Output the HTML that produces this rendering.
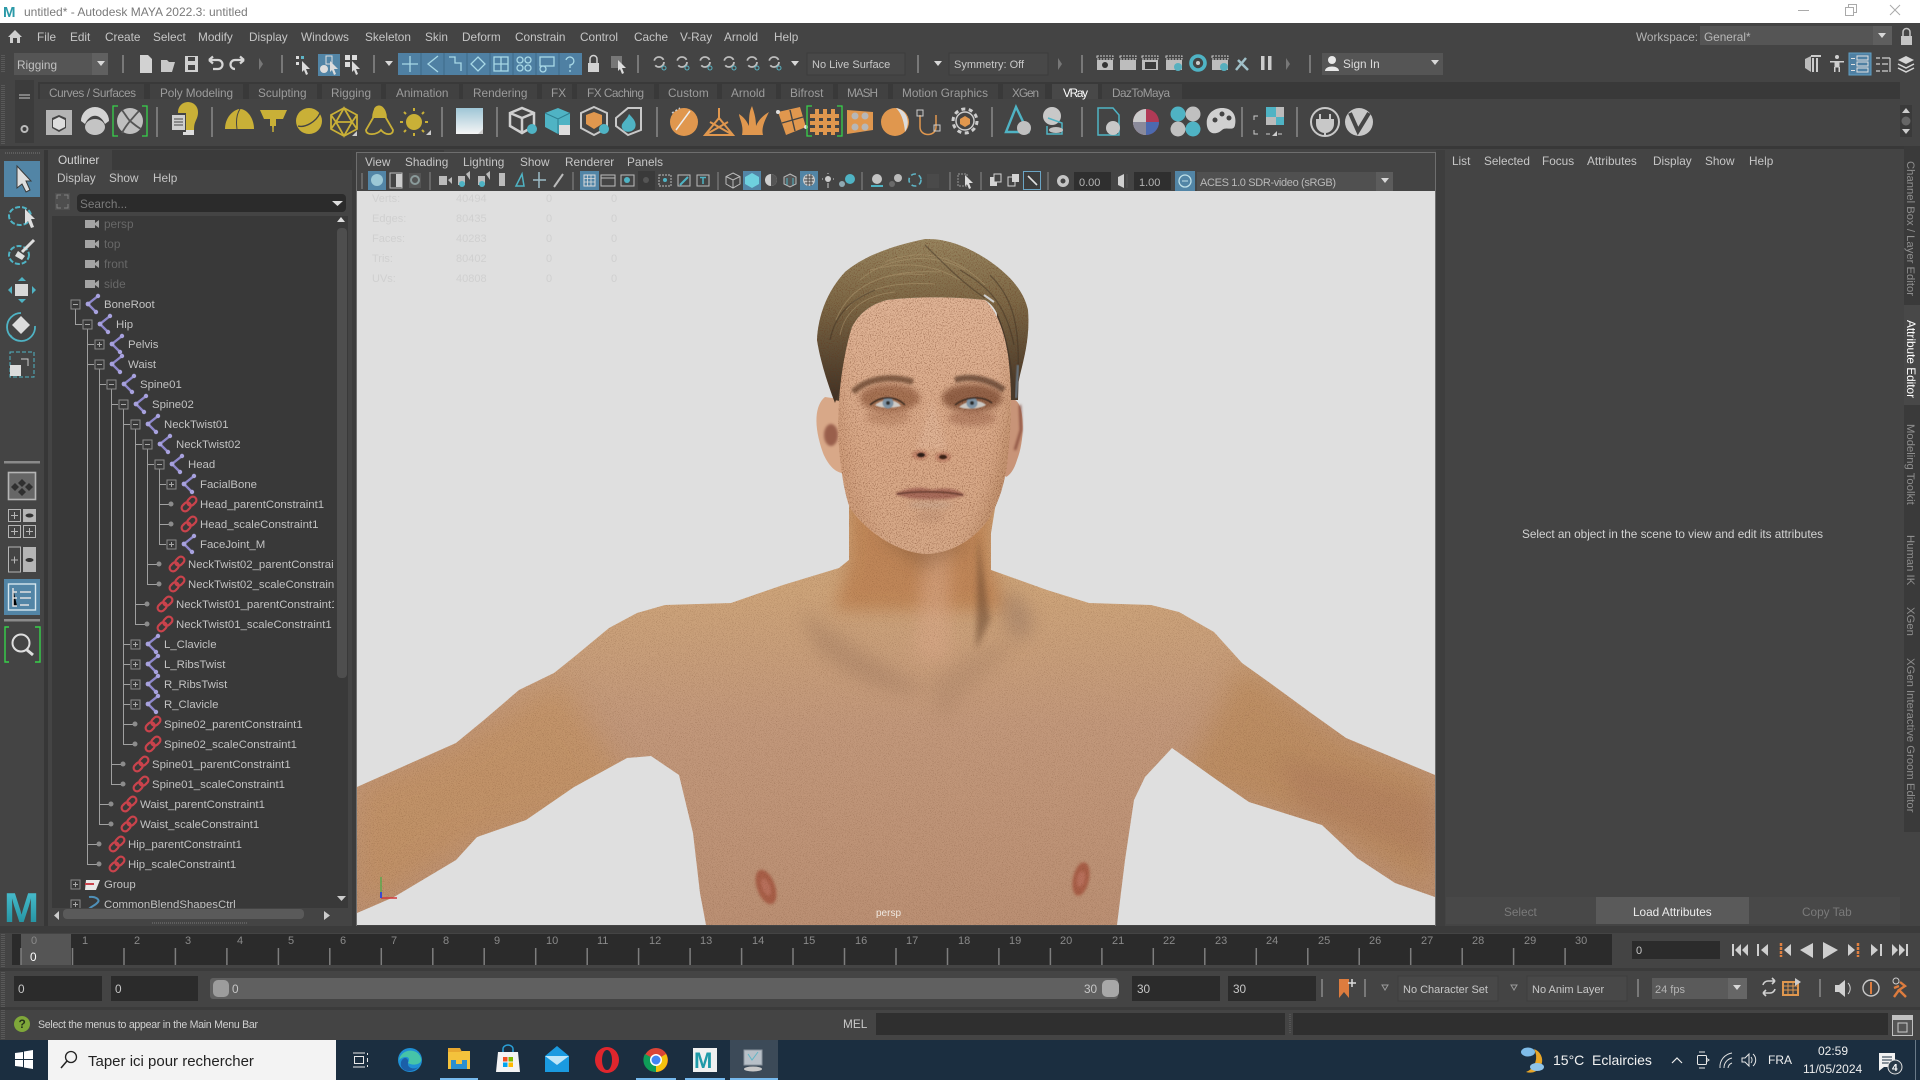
<!DOCTYPE html>
<html><head><meta charset="utf-8"><title>untitled* - Autodesk MAYA 2022.3: untitled</title>
<style>
html,body{margin:0;padding:0;background:#444;width:1920px;height:1080px;overflow:hidden}
svg{display:block}
text{font-family:"Liberation Sans",sans-serif;font-size:11.8px;fill:#c6c6c6;white-space:pre}
.tab{fill:#9c9c9c}.dim{fill:#686868}.tr{fill:#c2c2c2;font-size:11.4px}.w{fill:#fff}.num{fill:#8a8a8a;font-size:11px}.lt{fill:#d2d2d2}
.hud{fill:#d0d0d0;font-size:11px}.vt{fill:#8e8e8e;font-size:11.3px}
.tb{fill:#f2f2f2;font-size:14px}.sm{font-size:11px;fill:#c8c8c8}
</style></head><body>
<svg xmlns="http://www.w3.org/2000/svg" width="1920" height="1080" viewBox="0 0 1920 1080">
<defs>
<g id="j"><path d="M5-8-5 0 3 8" fill="none" stroke="#8f88cb" stroke-width="2.400"/><circle cx="5" cy="-8" r="2.200" fill="#a8a2de"/><circle cx="-5" cy="0" r="2.400" fill="#a8a2de"/><circle cx="3" cy="8" r="2.200" fill="#a8a2de"/></g>
<g id="c"><g transform="rotate(-45)" fill="none" stroke="#c9434c" stroke-width="2.200"><rect x="-9" y="-3.500" width="10" height="7" rx="3.500"/><rect x="-1" y="-3.500" width="10" height="7" rx="3.500"/></g></g>
<g id="cam"><rect x="-7" y="-4" width="10" height="8" fill="#a4a4a4"/><path d="M3-1 7-4V4L3 1Z" fill="#a4a4a4"/></g>
<g id="bm"><rect x="-4.500" y="-4.500" width="9" height="9" fill="#393939" stroke="#8a8a8a"/><path d="M-2.500 0H2.500" stroke="#a8a8a8"/></g>
<g id="bp"><rect x="-4.500" y="-4.500" width="9" height="9" fill="#393939" stroke="#8a8a8a"/><path d="M-2.500 0H2.500M0-2.500V2.500" stroke="#a8a8a8"/></g>
<circle id="d" r="2.500" fill="#8c8c8c"/>
<path id="sep" d="M0-9V9" stroke="#8a8a8a" stroke-width="1.500"/>
<path id="tri" d="M-2-6 2 0-2 6Z" fill="#777"/>
<path id="dn" d="M-4-2H4L0 3Z" fill="#d8d8d8"/>
<path id="dno" d="M-3-2H3L0 3Z" fill="none" stroke="#9a9a9a"/>
<path id="cor" d="M5 5H0L5 0Z" fill="#ccc"/>
<path id="cur" d="M-3-8 5 0H1L3 5 1 6-1 1-3 3Z" fill="#dcdcdc"/>
<g id="sn"><circle cx="-1" cy="-1" r="5" fill="none" stroke="#bdbdbd" stroke-width="1.800" stroke-dasharray="12 5"/><circle cx="4" cy="5" r="2" fill="none" stroke="#57b0bf" stroke-width="1"/></g>
<g id="cl"><rect x="-8" y="-6" width="16" height="3" fill="none" stroke="#ccc" stroke-dasharray="2 1"/><rect x="-8" y="-2" width="16" height="10" fill="#bdbdbd"/></g>
<linearGradient id="bod" x1="0" y1="590" x2="0" y2="925" gradientUnits="userSpaceOnUse"><stop offset="0" stop-color="#cda47a"/><stop offset=".4" stop-color="#c2987b"/><stop offset="1" stop-color="#bb9074"/></linearGradient>
<linearGradient id="hairg" x1="0" y1="238" x2="0" y2="400" gradientUnits="userSpaceOnUse"><stop offset="0" stop-color="#988660"/><stop offset=".4" stop-color="#7c6846"/><stop offset="1" stop-color="#3f3124"/></linearGradient>
<linearGradient id="fc" x1="0" y1="300" x2="0" y2="553" gradientUnits="userSpaceOnUse"><stop offset="0" stop-color="#e0b496"/><stop offset=".6" stop-color="#d9a988"/><stop offset="1" stop-color="#d6a988"/></linearGradient>
<linearGradient id="whg" x1="0" y1="0" x2="0" y2="1"><stop offset="0" stop-color="#9fc6d6"/><stop offset="1" stop-color="#f5f5f5"/></linearGradient>
<linearGradient id="mg" x1="0" y1="0" x2="0" y2="1"><stop offset="0" stop-color="#4fc6d6"/><stop offset="1" stop-color="#1d8a99"/></linearGradient>
<filter id="nz" filterUnits="userSpaceOnUse" x="357" y="191" width="1078" height="734" color-interpolation-filters="sRGB">
<feTurbulence type="fractalNoise" baseFrequency="1.15" numOctaves="2" seed="4" result="n"/>
<feColorMatrix in="n" type="matrix" values="0 0 0 0 .36 0 0 0 0 .2 0 0 0 0 .1 1 0 0 0 -.52" result="s"/>
<feComposite in="s" in2="SourceAlpha" operator="in" result="sp"/>
<feMerge><feMergeNode in="SourceGraphic"/><feMergeNode in="sp"/></feMerge></filter>
<filter id="nz2" filterUnits="userSpaceOnUse" x="357" y="191" width="1078" height="734" color-interpolation-filters="sRGB">
<feTurbulence type="fractalNoise" baseFrequency=".85" numOctaves="2" seed="9" result="n"/>
<feColorMatrix in="n" type="matrix" values="0 0 0 0 .4 0 0 0 0 .2 0 0 0 0 .1 1.7 0 0 0 -.84" result="s"/>
<feComposite in="s" in2="SourceAlpha" operator="in" result="sp"/>
<feMerge><feMergeNode in="SourceGraphic"/><feMergeNode in="sp"/></feMerge></filter>
<filter id="b3" x="-50%" y="-50%" width="200%" height="200%"><feGaussianBlur stdDeviation="3"/></filter>
<filter id="b1" x="-50%" y="-50%" width="200%" height="200%"><feGaussianBlur stdDeviation="1.200"/></filter>
<filter id="b05" x="-50%" y="-50%" width="200%" height="200%"><feGaussianBlur stdDeviation=".6"/></filter>
<filter id="b8" x="-50%" y="-50%" width="200%" height="200%"><feGaussianBlur stdDeviation="8"/></filter>
<filter id="b14" x="-50%" y="-50%" width="200%" height="200%"><feGaussianBlur stdDeviation="14"/></filter>
<path id="bodyp" d="M849 490L849 560 839 568 783 585 731 603 665 605 637 613 609 628 574 657 554 673 519 690 484 720 456 743 357 787V913L394 897 456 860 477 837 526 820 574 787 627 758 651 756 679 775 693 833 700 893 706 925H1117L1125 860 1134 800 1145 777 1172 748 1217 780 1249 802 1322 825 1357 858 1395 883 1435 897V775L1346 738 1311 713 1270 683 1242 663 1214 632 1179 612 1151 605 1089 603 1047 590 991 570 991 533 998 490Z"/>
<path id="facep" d="M852 327C842 350 838 400 838 433 840 470 845 495 850 508 865 530 895 552 925 554 950 554 975 540 990 517 1000 500 1006 480 1008 455 1012 420 1012 385 1008 355 1005 335 998 312 985 300 950 296 910 297 887 300 872 304 860 312 852 327Z"/>
<clipPath id="vpc"><rect x="357" y="191" width="1078" height="734"/></clipPath>
<clipPath id="bc"><use href="#bodyp"/></clipPath>
<clipPath id="fcc"><use href="#facep"/></clipPath>
<clipPath id="trc"><rect x="52" y="216" width="282" height="692"/></clipPath>
</defs>

<rect width="1920" height="1080" fill="#444"/>
<!-- title bar -->
<rect width="1920" height="23" fill="#fff"/>
<text x="3" y="17" style="font-size:15px;font-weight:bold;fill:#2c9aa8">M</text>
<text x="24" y="16" style="fill:#7a7a7a;font-size:12px">untitled* - Autodesk MAYA 2022.3: untitled</text>
<path d="M1798 10.500H1809" stroke="#aaa"/>
<path d="M1845.500 7.500H1853.500V15.500H1845.500ZM1848.500 7.500V4.500H1856.500V12.500H1853.500" fill="none" stroke="#aaa"/>
<path d="M1890 5 1900 15M1900 5 1890 15" stroke="#aaa"/>

<!-- menu bar -->
<path d="M8 37 15 30 22 37H20V43H17V38H13V43H10V37Z" fill="#cfcfcf"/>
<text x="37" y="41">File</text><text x="70" y="41">Edit</text><text x="105" y="41">Create</text><text x="153" y="41">Select</text><text x="198" y="41">Modify</text><text x="249" y="41">Display</text><text x="301" y="41">Windows</text><text x="365" y="41">Skeleton</text><text x="425" y="41">Skin</text><text x="462" y="41">Deform</text><text x="515" y="41">Constrain</text><text x="580" y="41">Control</text><text x="634" y="41">Cache</text><text x="680" y="41">V-Ray</text><text x="724" y="41">Arnold</text><text x="774" y="41">Help</text>
<text x="1636" y="41" style="fill:#b4b4b4">Workspace:</text>
<rect x="1700" y="26" width="192" height="19" fill="#555"/><rect x="1873" y="26" width="19" height="19" fill="#5e5e5e"/>
<text x="1704" y="41" style="fill:#b8b8b8">General*</text>
<use href="#dn" x="1882" y="35"/>
<rect x="1901" y="36" width="11" height="9" fill="#c4c4c4"/><path d="M1903 36V32A3.500 3.500 0 0 1 1910 32V36" fill="none" stroke="#c4c4c4" stroke-width="1.500"/>

<!-- status line -->
<path d="M2 55V72M4 55V72M2 85V145M4 85V145M2 932V1040M4 932V1040" stroke="#6e6e6e" stroke-dasharray="1 1"/>
<rect x="14" y="53" width="94" height="22" fill="#555"/><rect x="92" y="53" width="16" height="22" fill="#606060"/>
<text x="17" y="69" style="fill:#c0c0c0">Rigging</text><use href="#dn" x="101" y="63"/>
<use href="#sep" x="123" y="64"/>
<path d="M140 55H148L152 59V73H140Z" fill="#d2d2d2"/>
<path d="M161 60H167L169 62H175L172 72H161Z" fill="#c8c8c8"/>
<path d="M185 56H198V72H185Z" fill="#d0d0d0"/><rect x="188" y="65" width="7" height="5" fill="#444"/><rect x="188" y="57" width="7" height="4" fill="#444"/>
<path d="M209 60H218A4.500 4.500 0 0 1 218 69H213M209 60 213 56.500M209 60 213 63.500" fill="none" stroke="#d6d6d6" stroke-width="2.200"/>
<path d="M244 60H235A4.500 4.500 0 0 0 235 69M244 60 240 56.500M244 60 240 63.500" fill="none" stroke="#d6d6d6" stroke-width="2.200"/>
<use href="#tri" x="261" y="64"/><use href="#sep" x="282" y="64"/>
<rect x="318" y="54" width="22" height="22" fill="#5285a6"/>
<g transform="translate(302,64)"><rect x="-6" y="-8" width="3" height="3" fill="#ddd"/><rect x="-6" y="-2" width="3" height="3" fill="#ddd"/><rect x="-1" y="-8" width="3" height="3" fill="#5fb5c6"/></g><use href="#cur" x="305" y="69"/>
<circle cx="324" cy="69" r="4" fill="#ddd"/><rect x="326" y="56" width="6" height="8" fill="none" stroke="#ddd"/><use href="#cur" x="333" y="69"/>
<rect x="345" y="55" width="5" height="5" fill="#ddd"/><rect x="352" y="55" width="5" height="5" fill="#ddd"/><rect x="345" y="62" width="5" height="5" fill="#ddd"/><use href="#cur" x="355" y="69"/>
<use href="#sep" x="374" y="64"/><use href="#dn" x="389" y="63"/>
<rect x="398" y="53" width="184" height="22" fill="#4f80a3"/>
<path d="M421 53V75M444 53V75M467 53V75M490 53V75M513 53V75M536 53V75M559 53V75" stroke="#3e6a8a"/>
<g fill="none" stroke="#a8d8e6" stroke-width="1.300">
<path d="M410 56V72M402 64H418"/>
<path d="M438 56 428 64 438 72"/>
<path d="M449 57H455V63H461V71"/>
<path d="M478 57 485 64 478 71 471 64Z"/>
<rect x="494" y="57" width="14" height="14"/><path d="M494 64H508M501 57V71"/>
<circle cx="520" cy="60" r="3"/><circle cx="528" cy="60" r="3"/><circle cx="520" cy="68" r="3"/><circle cx="528" cy="68" r="3"/>
<rect x="540" y="57" width="14" height="9"/><circle cx="543" cy="69" r="3"/>
<path d="M566 60A4 4 0 1 1 570 65V68M570 70V72"/></g>
<rect x="588" y="63" width="11" height="9" fill="#d2d2d2"/><path d="M590 63V59A3.500 3.500 0 0 1 597 59V63" fill="none" stroke="#d2d2d2" stroke-width="1.500"/>
<rect x="611" y="56" width="11" height="12" fill="#777"/><use href="#cur" x="621" y="68"/>
<use href="#sep" x="638" y="64"/>
<use href="#sn" x="660" y="63"/><use href="#sn" x="683" y="63"/><use href="#sn" x="706" y="63"/><use href="#sn" x="730" y="63"/><use href="#sn" x="753" y="63"/><use href="#sn" x="775" y="63"/>
<use href="#dn" x="795" y="63"/>
<rect x="807" y="53" width="98" height="22" fill="#484848" stroke="#3c3c3c"/><text class="sm" x="812" y="68">No Live Surface</text>
<use href="#sep" x="918" y="64"/><use href="#dn" x="938" y="63"/>
<rect x="949" y="53" width="99" height="22" fill="#484848" stroke="#3c3c3c"/><text class="sm" x="954" y="68">Symmetry: Off</text>
<use href="#tri" x="1060" y="64"/><use href="#sep" x="1082" y="64"/>
<use href="#cl" x="1105" y="62"/><circle cx="1105" cy="65" r="3" fill="#333"/>
<use href="#cl" x="1128" y="62"/>
<use href="#cl" x="1150" y="62"/><rect x="1145" y="62" width="11" height="7" fill="#3a3a3a"/>
<use href="#cl" x="1174" y="62"/><circle cx="1178" cy="67" r="4" fill="#57b0bf"/>
<circle cx="1198" cy="63" r="7" fill="none" stroke="#4fb3c4" stroke-width="3.600"/><circle cx="1198" cy="63" r="2" fill="#ccc"/>
<use href="#cl" x="1220" y="62"/><circle cx="1224" cy="67" r="4" fill="#57b0bf"/>
<path d="M1236 70 1246 58M1238 60 1248 70" stroke="#a0c0c8" stroke-width="2.500"/>
<rect x="1261" y="56" width="3.500" height="14" fill="#ccc"/><rect x="1268" y="56" width="3.500" height="14" fill="#ccc"/>
<use href="#tri" x="1288" y="64"/><use href="#sep" x="1310" y="64"/>
<rect x="1322" y="53" width="121" height="22" fill="#555"/>
<circle cx="1332" cy="60" r="4" fill="#e8e8e8"/><path d="M1325 71C1325 65 1339 65 1339 71Z" fill="#e8e8e8"/>
<text x="1343" y="68" style="fill:#dcdcdc">Sign In</text><use href="#dn" x="1435" y="62"/>
<g transform="translate(1813,64)"><path d="M-8-5-2-8V8L-8 4Z" fill="#bbb"/><path d="M-2-8H8M0-6V8M4-6V8" stroke="#ccc" stroke-width="2"/></g>
<g transform="translate(1837,64)" fill="#d0d0d0"><circle cy="-7" r="2"/><path d="M-7-3H7V-1.500H2.500V3H3V8H1.500V3.500H-1.500V8H-3V3H-2.500V-1.500H-7Z"/></g>
<rect x="1849" y="53" width="22" height="22" fill="#4f80a3" stroke="#62a0c4"/>
<g stroke="#e0e0e0" fill="none"><path d="M1851 58.500H1855M1851 64.500H1855M1851 70.500H1855"/><rect x="1857" y="56" width="11" height="4"/><rect x="1857" y="62" width="11" height="4"/><rect x="1857" y="68" width="11" height="4"/></g>
<g stroke="#d0d0d0" fill="none" stroke-width="1.200"><path d="M1876 58H1880M1882 58H1890M1890 58V72M1876 64H1880M1882 64H1888M1876 71H1880M1882 71H1888"/></g>
<path d="M1906 56 1914 60 1906 64 1898 60Z" fill="#d6d6d6"/><path d="M1898 64 1906 68 1914 64M1898 68 1906 72 1914 68" fill="none" stroke="#d6d6d6" stroke-width="1.500"/>

<!-- shelf -->
<rect x="38" y="82" width="1862" height="17" fill="#393939"/>
<rect x="15" y="80" width="19" height="63" fill="#3c3c3c"/>
<path d="M19 95H30M19 98H30" stroke="#9a9a9a" stroke-width="1.400"/>
<circle cx="24.500" cy="129" r="3" fill="none" stroke="#bbb" stroke-width="2"/>
<g fill="#414141"><rect x="40" y="84" width="104" height="15"/><rect x="150" y="84" width="93" height="15"/><rect x="249" y="84" width="68" height="15"/><rect x="322" y="84" width="59" height="15"/><rect x="386" y="84" width="73" height="15"/><rect x="463" y="84" width="74" height="15"/><rect x="542" y="84" width="30" height="15"/><rect x="577" y="84" width="77" height="15"/><rect x="659" y="84" width="58" height="15"/><rect x="722" y="84" width="54" height="15"/><rect x="781" y="84" width="52" height="15"/><rect x="838" y="84" width="50" height="15"/><rect x="893" y="84" width="105" height="15"/><rect x="1003" y="84" width="42" height="15"/><rect x="1102" y="84" width="80" height="15"/></g>
<rect x="1052" y="84" width="46" height="15" fill="#484848"/>
<g><text class="tab" x="49" y="97" textLength="87">Curves / Surfaces</text><text class="tab" x="160" y="97" textLength="73">Poly Modeling</text><text class="tab" x="258" y="97">Sculpting</text><text class="tab" x="331" y="97">Rigging</text><text class="tab" x="396" y="97">Animation</text><text class="tab" x="473" y="97">Rendering</text><text class="tab" x="551" y="97">FX</text><text class="tab" x="587" y="97" textLength="57">FX Caching</text><text class="tab" x="668" y="97">Custom</text><text class="tab" x="731" y="97">Arnold</text><text class="tab" x="790" y="97">Bifrost</text><text class="tab" x="847" y="97" textLength="31">MASH</text><text class="tab" x="902" y="97" textLength="86">Motion Graphics</text><text class="tab" x="1012" y="97" textLength="27">XGen</text><text class="w" x="1063" y="97" textLength="25">VRay</text><text class="tab" x="1112" y="97" textLength="58">DazToMaya</text></g>
<!-- shelf icons -->
<g><rect x="46" y="110" width="26" height="25" fill="#b4b4b4"/><path d="M52 118 59 115 66 118V128L59 132 52 128Z" fill="#444"/><path d="M53 120 59 117 65 120V127L59 130 53 127Z" fill="#ddd"/></g>
<path d="M81 121A14 14 0 0 1 109 121L105 124C100 113 90 113 85 124Z" fill="#d4d4d4"/><ellipse cx="95" cy="127" rx="10" ry="8" fill="#c4c4c4"/>
<path d="M118 106H113V136H118M142 106H147V136H142" fill="none" stroke="#37d24a" stroke-width="1.300"/><circle cx="130" cy="121" r="13" fill="#bfbfbf"/><path d="M122 110C127 117 128 119 130 121 133 118 135 115 139 111M130 121C127 125 125 127 122 133M130 121C134 124 137 127 141 129" stroke="#555" stroke-width="1.800" fill="none"/>
<path d="M157 107V137" stroke="#8a8a8a" stroke-width="1.500"/>
<path d="M182 126C182 120 178 118 178 112A10 10 0 0 1 198 112C198 120 194 120 194 130H183Z" fill="#c9b037"/><rect x="183" y="130" width="11" height="5" fill="#ddd"/><rect x="170" y="113" width="16" height="19" fill="#444"/><rect x="172" y="115" width="13" height="15" fill="#cfcfcf"/><path d="M174 119H183M174 122H183M174 125H183" stroke="#444"/>
<path d="M212 107V137" stroke="#8a8a8a" stroke-width="1.500"/>
<path d="M225 129C225 116 235 109 240 109C247 109 254 118 254 129Z" fill="#c9b037"/><path d="M240 109C236 115 236 122 237 129" stroke="#444" fill="none"/>
<path d="M260 110H287L283 119H276V126H274L273 130 272 126H270V119H264Z" fill="#c9b037"/><path d="M273 122V132" stroke="#c9b037" stroke-width="1.500"/>
<circle cx="309" cy="121" r="13" fill="#c9b037"/><path d="M298 126C305 128 316 122 320 113" fill="none" stroke="#444" stroke-width="1.400"/>
<path d="M344 108 357 115V129L344 136 331 129V115ZM344 108 336 122H352ZM331 115 336 122 344 136 352 122 357 115M331 129 336 122M357 129 352 122" fill="none" stroke="#c9b037" stroke-width="1.800"/>
<path d="M379 107C385 107 386 115 386 118L393 130C393 136 385 135 381 130 377 135 366 136 366 130L373 118C373 115 374 107 379 107Z" fill="none" stroke="#c9b037" stroke-width="1.800"/><path d="M374 109C376 104 384 104 385 112L386 118H373Z" fill="#c9b037"/>
<circle cx="414" cy="122" r="8" fill="#c9b037"/><path d="M414 108V111M414 133V136M400 122H403M425 122H428M404 112 406 114M422 130 424 132M424 112 422 114M406 130 404 132" stroke="#c9b037" stroke-width="2"/>
<use href="#cor" x="426" y="130"/>
<use href="#cor" x="352" y="131"/>
<path d="M442 107V137" stroke="#8a8a8a" stroke-width="1.500"/>
<rect x="456" y="108" width="27" height="26" fill="url(#whg)"/><use href="#cor" x="478" y="129"/>
<path d="M497 107V137" stroke="#8a8a8a" stroke-width="1.500"/>
<path d="M510 113 522 108 534 113V126L522 133 510 126ZM510 113 522 118 534 113M522 118V133" fill="#444" stroke="#cfcfcf" stroke-width="2.500"/><circle cx="532" cy="129" r="5" fill="#4fb3c4"/>
<path d="M545 113 558 108 570 113V127L558 134 545 127Z" fill="#4fb3c4"/><path d="M545 113 558 119 570 113M558 119V134" stroke="#2e7f90" fill="none"/><rect x="559" y="125" width="11" height="10" fill="#ddd"/>
<path d="M594 107 607 113V128L594 135 581 128V113Z" fill="none" stroke="#c8c8c8" stroke-width="2"/><path d="M586 115 594 112 602 115V124L594 129 586 124Z" fill="#e0974e"/><circle cx="604" cy="129" r="5" fill="#4fb3c4"/>
<path d="M616 118 628 108 641 108V130L628 135 616 126Z" fill="none" stroke="#c8c8c8" stroke-width="2"/><path d="M629 114C634 119 637 123 635 128 632 133 624 133 622 128 620 123 627 120 629 114Z" fill="#4fb3c4"/>
<path d="M657 107V137" stroke="#8a8a8a" stroke-width="1.500"/>
<circle cx="684" cy="122" r="14" fill="#e0974e"/><path d="M676 130 690 111" stroke="#eee" stroke-width="1.500"/><path d="M672 113 680 108" stroke="#ccc" stroke-width="1.500" stroke-dasharray="2 2"/>
<path d="M719 108V120M705 135 719 118 733 135ZM705 135 728 122M733 135 710 122" fill="none" stroke="#e0974e" stroke-width="2"/>
<path d="M742 135C744 125 739 118 739 114 745 118 747 122 749 126 749 118 749 112 752 106 754 112 756 118 756 126 758 121 762 116 769 112 765 120 761 128 763 135Z" fill="#e0974e"/>
<path d="M778 112 800 107 806 127 786 135Z" fill="#e0974e"/><path d="M790 110 795 131M782 123 803 117" stroke="#444" stroke-width="1.400"/><circle cx="778" cy="112" r="2" fill="#ddd"/><circle cx="806" cy="127" r="2" fill="#ddd"/>
<g fill="#e0974e"><rect x="810" y="114" width="29" height="4"/><rect x="810" y="121" width="29" height="4"/><rect x="810" y="128" width="29" height="4"/><rect x="815" y="109" width="4" height="26"/><rect x="823" y="109" width="4" height="26"/><rect x="831" y="109" width="4" height="26"/></g>
<path d="M812 106H807V136H812M837 106H842V136H837" fill="none" stroke="#37d24a" stroke-width="1.300"/>
<path d="M847 110 873 112V130L847 134Z" fill="#e0974e"/><circle cx="855" cy="116" r="3.500" fill="#b7b7b7"/><circle cx="865" cy="116" r="3.500" fill="#b7b7b7"/><circle cx="855" cy="127" r="3.500" fill="#b7b7b7"/><circle cx="865" cy="127" r="3.500" fill="#b7b7b7"/>
<circle cx="895" cy="122" r="14" fill="#e0974e"/><path d="M896 108C907 110 911 122 905 132 904 122 902 114 896 108Z" fill="#dcdcdc"/>
<path d="M920 115V127C920 137 936 137 936 127V115" fill="none" stroke="#e0974e" stroke-width="1.500"/><rect x="917" y="110" width="6" height="6" fill="none" stroke="#ccc"/><rect x="934" y="125" width="6" height="6" fill="none" stroke="#ccc"/>
<g transform="translate(965,121)"><circle r="9" fill="none" stroke="#ccc" stroke-width="1.500"/><circle r="12" fill="none" stroke="#ccc" stroke-width="3" stroke-dasharray="4 3.500"/><path d="M-5-2 0-5 5-2V3L0 6-5 3Z" fill="#e0974e"/></g>
<path d="M992 107V137" stroke="#8a8a8a" stroke-width="1.500"/>
<path d="M1016 107 1006 132H1028Z" fill="none" stroke="#4fb3c4" stroke-width="2.400"/><circle cx="1024" cy="128" r="7" fill="#c0c0c0"/>
<circle cx="1052" cy="116" r="9" fill="#c8c8c8"/><path d="M1048 118 1062 123V134H1047V126" fill="none" stroke="#4fb3c4" stroke-width="1.500"/><ellipse cx="1056" cy="130" rx="7" ry="3" fill="#c0c0c0"/>
<path d="M1082 107V137" stroke="#8a8a8a" stroke-width="1.500"/>
<path d="M1098 108H1113L1119 115V135H1098Z" fill="none" stroke="#4fb3c4" stroke-width="1.500"/><circle cx="1113" cy="128" r="7" fill="#c8c8c8"/>
<circle cx="1146" cy="122" r="13" fill="#b03a56"/><path d="M1146 109A13 13 0 0 0 1146 135Z" fill="#ccc"/><path d="M1146 122H1159A13 13 0 0 1 1146 135Z" fill="#4c6ab0"/><path d="M1133 122A13 13 0 0 0 1146 135V122Z" fill="#8a8a9a"/>
<circle cx="1178" cy="114" r="7.500" fill="#4fb3c4"/><circle cx="1193" cy="114" r="7.500" fill="#c0c0c0"/><circle cx="1178" cy="129" r="7.500" fill="#c0c0c0"/><circle cx="1193" cy="129" r="7.500" fill="#4fb3c4"/>
<path d="M1207 126C1205 114 1214 108 1222 108 1232 108 1237 115 1235 125 1234 132 1226 126 1222 130 1218 134 1209 136 1207 126Z" fill="#d0d0d0"/><circle cx="1215" cy="120" r="2.500" fill="#444"/><circle cx="1222" cy="114" r="2.500" fill="#444"/><circle cx="1229" cy="118" r="2.500" fill="#444"/>
<path d="M1242 107V137" stroke="#8a8a8a" stroke-width="1.500"/>
<rect x="1266" y="107" width="10" height="10" fill="#4fb3c4"/><rect x="1276" y="117" width="8" height="8" fill="#4fb3c4"/><rect x="1276" y="107" width="8" height="10" fill="#bbb"/><rect x="1266" y="117" width="10" height="8" fill="#bbb"/>
<path d="M1254 120V116H1258M1254 130V134H1258M1266 134H1270M1278 134H1282" fill="none" stroke="#ccc"/>
<path d="M1297 107V137" stroke="#8a8a8a" stroke-width="1.500"/>
<circle cx="1325" cy="122" r="14" fill="none" stroke="#c8c8c8" stroke-width="2"/><path d="M1320 114V120M1330 114V120M1317 120H1333V124A8 8 0 0 1 1317 124ZM1325 131V136" fill="#c8c8c8" stroke="#c8c8c8" stroke-width="2"/>
<circle cx="1359" cy="122" r="14" fill="#c8c8c8"/><path d="M1350 113 1358 131 1369 113" fill="none" stroke="#444" stroke-width="4"/>
<use href="#cor" x="1272" y="131"/>
<rect x="1900" y="105" width="12" height="32" fill="#3a3a3a"/><path d="M1902 113 1906 108 1910 113Z M1902 129 1906 134 1910 129Z" fill="#ccc"/><circle cx="1906" cy="121" r="4.500" fill="#666"/>

<!-- horizontal dividers -->
<rect y="146" width="1920" height="3" fill="#383838"/>

<!-- left toolbox -->
<path d="M5 153H40" stroke="#777" stroke-dasharray="1 1"/>
<rect x="44" y="150" width="4" height="776" fill="#373737"/>
<rect x="4" y="161" width="36" height="36" fill="#5285a6"/>
<path d="M17 166 31 181H26L30 190 26 192 22 184 17 188Z" fill="#dedede" stroke="#3a3a3a"/>
<ellipse cx="20" cy="216" rx="11" ry="9" fill="none" stroke="#4fb3c4" stroke-width="2" stroke-dasharray="5 2"/><path d="M25 209 35 219H31L34 227 31 228 28 221 25 224Z" fill="#dedede"/>
<ellipse cx="19" cy="255" rx="10" ry="9" fill="none" stroke="#4fb3c4" stroke-width="2" stroke-dasharray="5 2"/><path d="M34 240 22 252" stroke="#dedede" stroke-width="3"/><path d="M18 251 25 256 22 260 15 256Z" fill="#dedede"/>
<rect x="15" y="284" width="13" height="12" fill="#d8d8d8"/><path d="M22 277 26 281H18ZM22 303 26 299H18ZM8 290 12 286V294ZM36 290 32 286V294Z" fill="#4fb3c4"/>
<path d="M21 316 30 325 21 334 12 325Z" fill="#dcdcdc"/><path d="M35 326A14 14 0 1 1 21 313M21 341A14 14 0 0 1 10 335" fill="none" stroke="#4fb3c4" stroke-width="1.800"/>
<rect x="10" y="352" width="24" height="25" fill="none" stroke="#4fb3c4" stroke-dasharray="4 2"/><rect x="10" y="365" width="11" height="11" fill="#dcdcdc"/><path d="M21 359H28V366" fill="none" stroke="#ccc"/>
<rect x="4" y="461" width="36" height="2.500" fill="#8a8a8a"/>
<rect x="8.500" y="472.500" width="27" height="27" fill="#666" stroke="#b5b5b5" stroke-width="1.600"/>
<path d="M22 479 26 483 22 487 18 483ZM15 483 19 487 15 491 11 487ZM29 483 33 487 29 491 25 487ZM22 488 26 492 22 496 18 492Z" fill="#2f2f2f"/>
<g fill="none" stroke="#b5b5b5"><rect x="8.500" y="509.500" width="12" height="12"/><rect x="8.500" y="525.500" width="12" height="12"/><rect x="23.500" y="525.500" width="12" height="12"/><path d="M11 515.500H18M14.500 512V519M11 531.500H18M14.500 528V535M26 531.500H33M29.500 528V535"/></g>
<rect x="23" y="509" width="13" height="13" fill="#b5b5b5"/><ellipse cx="29.500" cy="515.500" rx="4" ry="2" fill="#333"/>
<rect x="8.500" y="547" width="12" height="25" fill="none" stroke="#b5b5b5"/><path d="M11 560H18M14.500 556.500V563.500" stroke="#b5b5b5"/><rect x="23" y="547" width="13" height="25" fill="#b5b5b5"/><ellipse cx="29.500" cy="560" rx="4" ry="2" fill="#333"/>
<rect x="4" y="579" width="36" height="36" fill="#5285a6"/>
<rect x="8.500" y="584" width="27" height="26" fill="none" stroke="#d6e6ee" stroke-width="1.400"/><g stroke="#e0e0e0" stroke-width="1.500"><path d="M13 588V606H17M13 592H17M13 598H17M20 592H31M20 598H31M20 605H29"/></g>
<rect x="4" y="619" width="36" height="2.500" fill="#8a8a8a"/>
<path d="M9 627H5V662H9M35 627H40V662H35" fill="none" stroke="#37d24a" stroke-width="1.400"/>
<circle cx="21" cy="643" r="8.500" fill="none" stroke="#dedede" stroke-width="2"/><path d="M27 650 33 655" stroke="#dedede" stroke-width="3"/>
<text x="4" y="922" style="font-size:42px;font-weight:bold;fill:url(#mg)">M</text>

<!-- outliner -->
<rect x="48" y="150" width="304" height="776" fill="#444"/>
<rect x="112" y="150" width="240" height="20" fill="#3b3b3b"/>
<text x="58" y="164" style="fill:#d4d4d4">Outliner</text>
<text x="57" y="182">Display</text><text x="109" y="182">Show</text><text x="153" y="182">Help</text>
<rect x="55" y="193" width="15" height="17" fill="#4e4e4e"/><path d="M57 199V195H61M68 199V195H64M57 204V208H61M68 204V208H64" fill="none" stroke="#808080"/>
<rect x="77" y="194" width="269" height="18" rx="4" fill="#2b2b2b"/>
<text x="80" y="208" style="fill:#7c7c7c">Search...</text><path d="M332 201H343L337.500 206Z" fill="#ddd"/>
<rect x="52" y="216" width="296" height="692" fill="#393939"/>
<path d="M337 222 341 217 345 222Z" fill="#ddd"/>
<rect x="337" y="228" width="10" height="450" rx="4" fill="#4e4e4e"/>
<path d="M337 896H346L341.500 901Z" fill="#ccc"/>
<g stroke="#a0a0a0" fill="none">
<path d="M75.500 309V324.500H82"/>
<path d="M87.500 329V864.500H97M87.500 344.500H94M87.500 364.500H94M87.500 844.500H97"/>
<path d="M99.500 369V824.500H109M99.500 384.500H106M99.500 804.500H109"/>
<path d="M111.500 389V784.500H121M111.500 404.500H118M111.500 764.500H121"/>
<path d="M123.500 409V744.500H133M123.500 424.500H130M123.500 644.500H130M123.500 664.500H130M123.500 684.500H130M123.500 704.500H130M123.500 724.500H133"/>
<path d="M135.500 429V624.500H145M135.500 444.500H142M135.500 604.500H145"/>
<path d="M147.500 449V584.500H157M147.500 464.500H154M147.500 564.500H157"/>
<path d="M159.500 469V544.500H166M159.500 484.500H166M159.500 504.500H169M159.500 524.500H169"/>
</g>
<g clip-path="url(#trc)">
<use href="#cam" x="92" y="224"/><use href="#cam" x="92" y="244"/><use href="#cam" x="92" y="264"/><use href="#cam" x="92" y="284"/>
<text class="dim" x="104" y="228">persp</text><text class="dim" x="104" y="248">top</text><text class="dim" x="104" y="268">front</text><text class="dim" x="104" y="288">side</text>

<use href="#bm" x="75.500" y="304.500"/><use href="#j" x="93" y="304"/><text class="tr" x="104" y="308">BoneRoot</text>
<use href="#bm" x="87.500" y="324.500"/><use href="#j" x="105" y="324"/><text class="tr" x="116" y="328">Hip</text>
<use href="#bp" x="99.500" y="344.500"/><use href="#j" x="117" y="344"/><text class="tr" x="128" y="348">Pelvis</text>
<use href="#bm" x="99.500" y="364.500"/><use href="#j" x="117" y="364"/><text class="tr" x="128" y="368">Waist</text>
<use href="#bm" x="111.500" y="384.500"/><use href="#j" x="129" y="384"/><text class="tr" x="140" y="388">Spine01</text>
<use href="#bm" x="123.500" y="404.500"/><use href="#j" x="141" y="404"/><text class="tr" x="152" y="408">Spine02</text>
<use href="#bm" x="135.500" y="424.500"/><use href="#j" x="153" y="424"/><text class="tr" x="164" y="428">NeckTwist01</text>
<use href="#bm" x="147.500" y="444.500"/><use href="#j" x="165" y="444"/><text class="tr" x="176" y="448">NeckTwist02</text>
<use href="#bm" x="159.500" y="464.500"/><use href="#j" x="177" y="464"/><text class="tr" x="188" y="468">Head</text>
<use href="#bp" x="171.500" y="484.500"/><use href="#j" x="189" y="484"/><text class="tr" x="200" y="488">FacialBone</text>
<use href="#d" x="171" y="504"/><use href="#c" x="189" y="504"/><text class="tr" x="200" y="508">Head_parentConstraint1</text>
<use href="#d" x="171" y="524"/><use href="#c" x="189" y="524"/><text class="tr" x="200" y="528">Head_scaleConstraint1</text>
<use href="#bp" x="171.500" y="544.500"/><use href="#j" x="189" y="544"/><text class="tr" x="200" y="548">FaceJoint_M</text>
<use href="#d" x="159" y="564"/><use href="#c" x="177" y="564"/><text class="tr" x="188" y="568">NeckTwist02_parentConstraint1</text>
<use href="#d" x="159" y="584"/><use href="#c" x="177" y="584"/><text class="tr" x="188" y="588">NeckTwist02_scaleConstraint1</text>
<use href="#d" x="147" y="604"/><use href="#c" x="165" y="604"/><text class="tr" x="176" y="608">NeckTwist01_parentConstraint1</text>
<use href="#d" x="147" y="624"/><use href="#c" x="165" y="624"/><text class="tr" x="176" y="628">NeckTwist01_scaleConstraint1</text>
<use href="#bp" x="135.500" y="644.500"/><use href="#j" x="153" y="644"/><text class="tr" x="164" y="648">L_Clavicle</text>
<use href="#bp" x="135.500" y="664.500"/><use href="#j" x="153" y="664"/><text class="tr" x="164" y="668">L_RibsTwist</text>
<use href="#bp" x="135.500" y="684.500"/><use href="#j" x="153" y="684"/><text class="tr" x="164" y="688">R_RibsTwist</text>
<use href="#bp" x="135.500" y="704.500"/><use href="#j" x="153" y="704"/><text class="tr" x="164" y="708">R_Clavicle</text>
<use href="#d" x="135" y="724"/><use href="#c" x="153" y="724"/><text class="tr" x="164" y="728">Spine02_parentConstraint1</text>
<use href="#d" x="135" y="744"/><use href="#c" x="153" y="744"/><text class="tr" x="164" y="748">Spine02_scaleConstraint1</text>
<use href="#d" x="123" y="764"/><use href="#c" x="141" y="764"/><text class="tr" x="152" y="768">Spine01_parentConstraint1</text>
<use href="#d" x="123" y="784"/><use href="#c" x="141" y="784"/><text class="tr" x="152" y="788">Spine01_scaleConstraint1</text>
<use href="#d" x="111" y="804"/><use href="#c" x="129" y="804"/><text class="tr" x="140" y="808">Waist_parentConstraint1</text>
<use href="#d" x="111" y="824"/><use href="#c" x="129" y="824"/><text class="tr" x="140" y="828">Waist_scaleConstraint1</text>
<use href="#d" x="99" y="844"/><use href="#c" x="117" y="844"/><text class="tr" x="128" y="848">Hip_parentConstraint1</text>
<use href="#d" x="99" y="864"/><use href="#c" x="117" y="864"/><text class="tr" x="128" y="868">Hip_scaleConstraint1</text>
<use href="#bp" x="75.500" y="884.500"/><path d="M86 880H100L96 890H85Z" fill="#e8e8e8"/><path d="M85 884H94" stroke="#c9434c" stroke-width="2"/><text class="tr" x="104" y="888">Group</text>
<use href="#bp" x="75.500" y="904.500"/><path d="M89 897C96 896 100 900 98 902 95 906 91 906 88 910" fill="none" stroke="#4f90b8" stroke-width="2"/><text class="tr" x="104" y="908">CommonBlendShapesCtrl</text>
</g>
<rect x="52" y="908" width="296" height="14" fill="#444"/>
<path d="M59 911V920L54 915.500Z M324 911V920L330 915.500Z" fill="#ccc"/>
<rect x="63" y="909" width="241" height="10" rx="4" fill="#5a5a5a"/>
<path d="M152 923H248" stroke="#777" stroke-dasharray="1 1"/>

<!-- viewport -->
<rect x="352" y="150" width="92" height="776" fill="#3c3c3c"/>
<rect x="356.500" y="152.500" width="1079" height="774" fill="#444" stroke="#6e6e6e"/>
<rect x="357" y="191" width="1078" height="734" fill="#dfdfdf"/>
<text x="365" y="166">View</text><text x="405" y="166">Shading</text><text x="463" y="166">Lighting</text><text x="520" y="166">Show</text><text x="565" y="166">Renderer</text><text x="627" y="166">Panels</text>
<!-- viewport toolbar -->
<g>
<path d="M362 173V189" stroke="#8a8a8a"/>
<rect x="368" y="171" width="18" height="19" fill="#5285a6"/><circle cx="377" cy="180" r="6" fill="#9cc8d6"/>
<rect x="390" y="173" width="12" height="15" fill="#444" stroke="#bbb"/><rect x="396" y="174" width="6" height="13" fill="#ccc"/>
<path d="M409 173H421V188H409Z" fill="#555"/><circle cx="415" cy="180" r="4" fill="none" stroke="#8a9a9a" stroke-width="2"/>
<path d="M430 172V190" stroke="#8a8a8a"/>
<path d="M439 176H447V185H439ZM448 180 452 177V184Z" fill="#bbb"/>
<path d="M458 176H465V185H458ZM466 174 470 171V180Z" fill="#bbb"/><circle cx="462" cy="184" r="3" fill="#4fb3c4"/>
<path d="M478 176H485V185H478ZM486 174 490 171V180Z" fill="#bbb"/><circle cx="482" cy="184" r="3" fill="#4fb3c4"/>
<rect x="499" y="173" width="6" height="13" fill="#bbb"/>
<path d="M516 186 522 174 524 186Z" fill="none" stroke="#4fb3c4" stroke-width="1.500"/>
<path d="M539 172V188M533 180H546" stroke="#9bbcc6" stroke-width="1.500"/>
<path d="M554 187 563 174" stroke="#bbb" stroke-width="2"/>
<path d="M573 172V190" stroke="#8a8a8a"/>
<rect x="580" y="171" width="19" height="19" fill="#5285a6"/><rect x="584" y="175" width="11" height="11" fill="none" stroke="#dcdcdc"/><path d="M584 178.500H595M584 182H595M587.500 175V186M591 175V186" stroke="#dcdcdc" stroke-width=".8"/>
<rect x="601" y="175" width="14" height="11" fill="none" stroke="#bbb"/><path d="M601 178H615" stroke="#bbb"/>
<rect x="621" y="175" width="13" height="11" fill="none" stroke="#bbb"/><circle cx="627" cy="180" r="3" fill="#4fb3c4"/>
<rect x="638" y="171" width="17" height="19" fill="#3a3a3a"/><circle cx="646" cy="180" r="3" fill="#555"/>
<rect x="659" y="175" width="12" height="11" fill="none" stroke="#bbb" stroke-dasharray="2 1"/><circle cx="665" cy="180" r="2" fill="#4fb3c4"/>
<rect x="678" y="175" width="12" height="11" fill="none" stroke="#bbb"/><path d="M680 185 688 177" stroke="#4fb3c4" stroke-width="2"/>
<rect x="697" y="175" width="12" height="11" fill="none" stroke="#bbb"/><path d="M700 177.500H706M703 177.500V184" stroke="#4fb3c4" stroke-width="1.500"/>
<path d="M718 172V190" stroke="#8a8a8a"/>
<path d="M733 173 740 176.500V184L733 188 726 184V176.500ZM726 176.500 733 180 740 176.500M733 180V188" fill="none" stroke="#bbb"/>
<rect x="743" y="171" width="18" height="19" fill="#5285a6"/><path d="M752 173 759 177V184L752 188 745 184V177Z" fill="#6ed0de"/>
<circle cx="771" cy="180" r="6" fill="#cfcfcf"/><path d="M771 174A6 6 0 0 1 771 186Z" fill="#555"/>
<path d="M790 174 796 177V184L790 187 784 184V177Z" fill="#555" stroke="#bbb"/><path d="M787 178V185M793 178V185" stroke="#4fb3c4"/>
<rect x="800" y="171" width="18" height="19" fill="#5285a6"/><circle cx="809" cy="180" r="6" fill="#c8c8c8"/><path d="M805 177H813M804 180H814M805 183H813M808 174V186M811 174V186" stroke="#444" stroke-width="1"/>
<circle cx="828" cy="179" r="3" fill="#ccc"/><path d="M828 173V174M823 179H822M833 179H834M828 183V188" stroke="#ccc"/>
<circle cx="850" cy="179" r="5" fill="#4fb3c4"/><circle cx="842" cy="184" r="3" fill="#8fa9b2"/>
<path d="M862 172V190" stroke="#8a8a8a"/>
<circle cx="877" cy="179" r="5" fill="#c4c4c4"/><path d="M871 186H883" stroke="#4fb3c4" stroke-width="2"/>
<circle cx="898" cy="178" r="4" fill="#bbb"/><circle cx="892" cy="184" r="3" fill="#6a6a6a"/>
<circle cx="915" cy="180" r="6" fill="none" stroke="#5fb5c6" stroke-width="1.600" stroke-dasharray="5 3"/>
<rect x="927" y="174" width="12" height="14" fill="#4a4a4a"/>
<path d="M950 172V190" stroke="#8a8a8a"/>
<rect x="958" y="174" width="9" height="12" fill="none" stroke="#999" stroke-dasharray="2 1"/><use href="#cur" x="968" y="183"/>
<path d="M981 172V190" stroke="#8a8a8a"/>
<rect x="990" y="177" width="7" height="9" fill="#d4d4d4"/><rect x="994" y="174" width="7" height="8" fill="#444" stroke="#d4d4d4"/>
<rect x="1008" y="177" width="7" height="9" fill="#444" stroke="#d4d4d4"/><rect x="1012" y="174" width="7" height="8" fill="#d4d4d4"/>
<rect x="1023.500" y="171.500" width="17" height="18" fill="#3c3c3c" stroke="#6aa4c4"/><path d="M1028 176 1037 185" stroke="#e0e0e0" stroke-width="1.600"/>
<path d="M1048 172V190" stroke="#8a8a8a"/>
<circle cx="1063" cy="181" r="6" fill="#c6c6c6"/><circle cx="1063" cy="181" r="2.500" fill="#444"/>
<rect x="1074" y="172" width="37" height="18" fill="#2f2f2f"/><text class="sm" x="1079" y="186" style="fill:#b4b4b4">0.00</text>
<path d="M1118 177 1124 174V188L1118 185Z" fill="#d0d0d0"/><path d="M1127 174V188" stroke="#555"/>
<rect x="1134" y="172" width="37" height="18" fill="#2f2f2f"/><text class="sm" x="1139" y="186" style="fill:#b4b4b4">1.00</text>
<rect x="1175" y="171" width="20" height="20" fill="#5285a6"/><circle cx="1185" cy="181" r="6" fill="none" stroke="#bfe0e8" stroke-width="1.300"/><path d="M1182 181H1188" stroke="#bfe0e8"/>
<rect x="1197" y="172" width="196" height="19" fill="#505050"/><rect x="1376" y="172" width="17" height="19" fill="#5c5c5c"/>
<text x="1200" y="186" style="fill:#b9b9b9;font-size:11px" textLength="136">ACES 1.0 SDR-video (sRGB)</text><use href="#dn" x="1385" y="180"/>
</g>
<!-- HUD -->
<g><text class="hud" x="372" y="202">Verts:</text><text class="hud" x="456" y="202">40494</text><text class="hud" x="546" y="202">0</text><text class="hud" x="611" y="202">0</text>
<text class="hud" x="372" y="222">Edges:</text><text class="hud" x="456" y="222">80435</text><text class="hud" x="546" y="222">0</text><text class="hud" x="611" y="222">0</text>
<text class="hud" x="372" y="242">Faces:</text><text class="hud" x="456" y="242">40283</text><text class="hud" x="546" y="242">0</text><text class="hud" x="611" y="242">0</text>
<text class="hud" x="372" y="262">Tris:</text><text class="hud" x="456" y="262">80402</text><text class="hud" x="546" y="262">0</text><text class="hud" x="611" y="262">0</text>
<text class="hud" x="372" y="282">UVs:</text><text class="hud" x="456" y="282">40808</text><text class="hud" x="546" y="282">0</text><text class="hud" x="611" y="282">0</text></g>

<!-- figure -->
<g clip-path="url(#vpc)">
<g filter="url(#nz)">
<use href="#bodyp" fill="url(#bod)"/>
<g clip-path="url(#bc)">
<path d="M357 787 456 743 560 680 640 800 480 840 357 913Z" fill="#c2905c" opacity=".55" filter="url(#b14)"/>
<path d="M1435 775 1346 738 1242 663 1180 780 1322 825 1435 897Z" fill="#b98856" opacity=".65" filter="url(#b14)"/>
<path d="M1435 800 1340 770 1280 760 1300 810 1435 860Z" fill="#a8735c" opacity=".3" filter="url(#b8)"/>
<path d="M849 490V560L835 610 1005 610 991 560V490Z" fill="#bd8252" opacity=".85" filter="url(#b8)"/>
<path d="M925 530 950 530 950 660 915 660Z" fill="#d9a888" opacity=".6" filter="url(#b8)"/>
<path d="M978 535 990 620 976 650 978 535Z" fill="#6b4a32" opacity=".55" filter="url(#b3)"/>
<path d="M1005 590C1030 600 1040 620 1025 640 1005 640 1000 610 1005 590Z" fill="#8f7160" opacity=".4" filter="url(#b8)"/>
<path d="M800 610C850 640 890 670 925 690 900 700 850 680 815 650Z" fill="#947058" opacity=".3" filter="url(#b8)"/>
<path d="M930 685C970 650 1000 640 1020 640L940 720Z" fill="#a37d62" opacity=".28" filter="url(#b8)"/>
<path d="M925 490 880 537 923 570 967 547Z" fill="#7e5638" opacity=".4" filter="url(#b8)"/>
<ellipse cx="766" cy="887" rx="9" ry="18" transform="rotate(-20 766 887)" fill="#a04e38" opacity=".75" filter="url(#b1)"/>
<ellipse cx="1081" cy="879" rx="8" ry="17" transform="rotate(12 1081 879)" fill="#a04e38" opacity=".75" filter="url(#b1)"/>
<ellipse cx="766" cy="887" rx="4" ry="9" transform="rotate(-20 766 887)" fill="#b8705c" filter="url(#b1)"/>
<ellipse cx="1081" cy="879" rx="4" ry="8" transform="rotate(12 1081 879)" fill="#b8705c" filter="url(#b1)"/>
</g>
</g>
<!-- head -->
<path d="M825 397C815 405 813 425 823 453 828 465 835 472 842 473L846 400Z" fill="#d8a888"/>
<ellipse cx="831" cy="435" rx="7" ry="11" fill="#8a4e3c" opacity=".8" filter="url(#b1)"/>
<path d="M1015 400C1025 405 1025 440 1017 460 1014 470 1010 475 1006 477L1000 470 1006 400Z" fill="#c89478"/>
<path d="M1020 405 1021 430 1015 450" stroke="#7a3d30" stroke-width="2" fill="none" filter="url(#b1)"/>
<path d="M996 302 1020 330 1018 400 1003 400Z" fill="#4a3a2a"/>
<path d="M856 315 834 400 846 402Z" fill="#4a3a2a"/>
<g filter="url(#nz2)">
<use href="#facep" fill="url(#fc)"/>
<g clip-path="url(#fcc)">
<path d="M840 340C840 430 845 500 880 540 860 545 830 500 825 400Z" fill="#b8825e" opacity=".45" filter="url(#b8)"/>
<path d="M1012 340C1010 430 1000 500 965 550 990 550 1025 500 1025 400Z" fill="#a07048" opacity=".5" filter="url(#b8)"/>
<ellipse cx="890" cy="398" rx="30" ry="14" fill="#8f5a3e" opacity=".7" filter="url(#b3)"/>
<ellipse cx="972" cy="398" rx="30" ry="14" fill="#7e4d34" opacity=".78" filter="url(#b3)"/>
<ellipse cx="888" cy="417" rx="22" ry="8" fill="#a87355" opacity=".45" filter="url(#b3)"/>
<ellipse cx="972" cy="418" rx="24" ry="8" fill="#986248" opacity=".5" filter="url(#b3)"/>
<path d="M853 392C870 376 895 376 913 382" stroke="#5a3a28" stroke-width="6" fill="none" opacity=".7" filter="url(#b1)"/>
<path d="M955 380C970 375 990 379 1004 390" stroke="#4f3425" stroke-width="6" fill="none" opacity=".7" filter="url(#b1)"/>
<path d="M932 400 916 450 948 450Z" fill="#e4bca0" opacity=".5" filter="url(#b3)"/>
<ellipse cx="920" cy="455" rx="8" ry="5" fill="#b36f5a" opacity=".6" filter="url(#b1)"/>
<ellipse cx="943" cy="457" rx="8" ry="5" fill="#b36f5a" opacity=".6" filter="url(#b1)"/>
<ellipse cx="921" cy="455" rx="4" ry="2.200" fill="#2a1c18" filter="url(#b05)"/>
<ellipse cx="943" cy="457" rx="4" ry="2.200" fill="#3a2018" filter="url(#b05)"/>
<path d="M895 494C910 486 925 487 932 490 945 487 955 488 965 495 945 502 915 502 895 494Z" fill="#a86c5c" filter="url(#b1)"/>
<path d="M897 494C915 491 945 491 963 495" stroke="#6a4034" stroke-width="1.500" fill="none" filter="url(#b05)"/>
<ellipse cx="930" cy="505" rx="22" ry="4" fill="#cba68c" filter="url(#b3)"/>
<ellipse cx="930" cy="516" rx="14" ry="5" fill="#c09478" opacity=".6" filter="url(#b3)"/>
</g>
</g>
<!-- eyes -->
<g filter="url(#b05)">
<path d="M875 405C882 399 895 398 901 406 895 408 881 409 875 405Z" fill="#cfcbc6"/>
<path d="M959 407C967 400 980 399 986 405 980 409 966 410 959 407Z" fill="#cbc7c2"/>
<circle cx="888" cy="403" r="5.500" fill="#7e92a2"/><circle cx="972" cy="403" r="5.500" fill="#7e92a2"/><circle cx="888" cy="403" r="2" fill="#2c2c2c"/><circle cx="972" cy="403" r="2" fill="#2c2c2c"/>
<path d="M870 405C880 396 895 395 905 405" stroke="#3a2a20" stroke-width="1.500" fill="none"/><path d="M955 405C965 397 982 395 992 403" stroke="#3a2a20" stroke-width="1.500" fill="none"/>
</g>
<!-- hair -->
<path d="M817 340C818 315 828 290 845 272 865 255 895 245 925 239 950 238 975 250 995 265 1012 278 1024 292 1028 310 1030 335 1025 355 1020 375L1015 398C1013 370 1008 340 1000 320 996 310 992 304 985 300 950 296 910 297 887 300 872 304 860 312 852 327 846 345 842 370 840 388L835 403C828 385 820 360 817 340Z" fill="url(#hairg)" filter="url(#nz2)"/>
<g fill="none" stroke="#ad9870" stroke-width="1" opacity=".5">
<path d="M836 320C850 285 885 270 925 275M846 310C865 285 900 282 935 284M860 280C885 258 930 250 965 270M885 262C915 250 950 250 985 285M840 335C845 310 865 295 895 292M870 270C900 262 930 262 960 280M852 295C875 275 905 270 940 272"/></g>
<g fill="none" stroke="#3c2e22" stroke-width="1.300" opacity=".45"><path d="M960 270C985 285 1005 300 1014 345M990 275C1010 295 1020 320 1018 370M830 340C835 315 850 300 875 290M925 245C945 265 965 285 985 298"/></g>
<path d="M984 295 994 302" stroke="#d0d0d0" stroke-width="2"/>
<path d="M1018 365 1016 398" stroke="#666f78" stroke-width="2.500" filter="url(#b05)"/>
</g>
<path d="M381 877V898" stroke="#5aa84e" stroke-width="1.500"/><path d="M381 898H397" stroke="#d03838" stroke-width="1.500"/><path d="M381 898V892" stroke="#3a4ad0" stroke-width="2"/>
<text x="876" y="916" style="font-size:10px;fill:#f0e8e0">persp</text>

<!-- attribute editor -->
<rect x="1436" y="150" width="9" height="776" fill="#3e3e3e"/>
<text x="1452" y="165">List</text><text x="1484" y="165">Selected</text><text x="1542" y="165">Focus</text><text x="1587" y="165">Attributes</text><text x="1653" y="165">Display</text><text x="1705" y="165">Show</text><text x="1749" y="165">Help</text>
<text class="lt" x="1522" y="538" textLength="301">Select an object in the scene to view and edit its attributes</text>
<rect x="1446" y="897" width="150" height="27" fill="#484848"/><rect x="1596" y="897" width="153" height="27" fill="#5a5a5a"/><rect x="1749" y="897" width="151" height="27" fill="#484848"/>
<text x="1504" y="916" style="fill:#7a7a7a">Select</text><text x="1633" y="916" style="fill:#ececec">Load Attributes</text><text x="1802" y="916" style="fill:#7a7a7a">Copy Tab</text>
<!-- right tabs -->
<rect x="1904" y="146" width="16" height="686" fill="#3a3a3a"/>
<rect x="1904" y="305" width="16" height="100" fill="#484848"/>
<g>
<text class="vt" transform="translate(1907,161) rotate(90)">Channel Box / Layer Editor</text>
<text class="w" transform="translate(1907,320) rotate(90)">Attribute Editor</text>
<text class="vt" transform="translate(1907,424) rotate(90)">Modeling Toolkit</text>
<text class="vt" transform="translate(1907,535) rotate(90)">Human IK</text>
<text class="vt" transform="translate(1907,607) rotate(90)">XGen</text>
<text class="vt" transform="translate(1907,658) rotate(90)">XGen Interactive Groom Editor</text>
</g>

<!-- time slider -->
<rect y="926" width="1920" height="7" fill="#3b3b3b"/>
<rect x="12" y="934" width="1600" height="31" fill="#2b2b2b"/>
<rect x="21" y="934" width="50" height="31" fill="#555"/>
<path d="M21 948V965M72.500 948V965M124 948V965M175.400 948V965M226.900 948V965M278.400 948V965M329.800 948V965M381.300 948V965M432.800 948V965M484.200 948V965M535.700 948V965M587.200 948V965M638.600 948V965M690.100 948V965M741.600 948V965M793 948V965M844.500 948V965M896 948V965M947.500 948V965M998.900 948V965M1050.400 948V965M1101.900 948V965M1153.300 948V965M1204.800 948V965M1256.300 948V965M1307.800 948V965M1359.200 948V965M1410.700 948V965M1462.200 948V965M1513.600 948V965M1565.100 948V965" stroke="#7e7e7e" stroke-width="1.500"/>
<g><text class="num" x="31" y="944">0</text><text class="num" x="82" y="944">1</text><text class="num" x="134" y="944">2</text><text class="num" x="185" y="944">3</text><text class="num" x="237" y="944">4</text><text class="num" x="288" y="944">5</text><text class="num" x="340" y="944">6</text><text class="num" x="391" y="944">7</text><text class="num" x="443" y="944">8</text><text class="num" x="494" y="944">9</text><text class="num" x="546" y="944">10</text><text class="num" x="597" y="944">11</text><text class="num" x="649" y="944">12</text><text class="num" x="700" y="944">13</text><text class="num" x="752" y="944">14</text><text class="num" x="803" y="944">15</text><text class="num" x="855" y="944">16</text><text class="num" x="906" y="944">17</text><text class="num" x="958" y="944">18</text><text class="num" x="1009" y="944">19</text><text class="num" x="1060" y="944">20</text><text class="num" x="1112" y="944">21</text><text class="num" x="1163" y="944">22</text><text class="num" x="1215" y="944">23</text><text class="num" x="1266" y="944">24</text><text class="num" x="1318" y="944">25</text><text class="num" x="1369" y="944">26</text><text class="num" x="1421" y="944">27</text><text class="num" x="1472" y="944">28</text><text class="num" x="1524" y="944">29</text><text class="num" x="1575" y="944">30</text></g>
<text class="w" x="30" y="961">0</text>
<rect x="1632" y="941" width="88" height="18" fill="#2b2b2b"/><text x="1636" y="954" style="font-size:11px">0</text>
<g fill="#cfcfcf">
<path d="M1732 944V956H1734V944ZM1741 944 1735 950 1741 956ZM1748 944 1742 950 1748 956Z"/>
<path d="M1757 944V956H1759V944ZM1768 944 1761 950 1768 956Z"/>
<path d="M1781 943V957" stroke="#e08040" stroke-width="2.500" stroke-dasharray="3 1"/><path d="M1791 944 1784 950 1791 956Z"/>
<path d="M1813 943 1800 950 1813 958Z"/>
<path d="M1823 942 1838 950 1823 959Z"/>
<path d="M1848 944 1855 950 1848 956Z"/><path d="M1858 943V957" stroke="#e08040" stroke-width="2.500" stroke-dasharray="3 1"/>
<path d="M1871 944 1878 950 1871 956ZM1880 944V956H1882V944Z"/>
<path d="M1892 944 1898 950 1892 956ZM1899 944 1905 950 1899 956ZM1906 944V956H1908V944Z"/>
</g>
<!-- range row -->
<rect y="968" width="1920" height="3" fill="#3b3b3b"/>
<rect x="14" y="976" width="88" height="25" fill="#2b2b2b"/><text x="18" y="993">0</text>
<rect x="111" y="976" width="87" height="25" fill="#2b2b2b"/><text x="115" y="993">0</text>
<rect x="210" y="978" width="908" height="21" rx="3" fill="#606060"/>
<rect x="213" y="980" width="16" height="17" rx="5" fill="#9c9c9c"/><text x="232" y="993">0</text>
<rect x="1102" y="980" width="17" height="17" rx="5" fill="#a8a8a8"/><text x="1084" y="993">30</text>
<rect x="1132" y="976" width="88" height="25" fill="#2b2b2b"/><text x="1137" y="993">30</text>
<rect x="1228" y="976" width="88" height="25" fill="#2b2b2b"/><text x="1233" y="993">30</text>
<use href="#sep" x="1322" y="988"/><use href="#sep" x="1365" y="988"/><use href="#sep" x="1638" y="988"/><use href="#sep" x="1820" y="988"/>
<path d="M1339 979H1349V998L1344 992 1339 998Z" fill="#dd7c3e"/><path d="M1352 979V987M1348 983H1356" stroke="#dcdcdc" stroke-width="1.500"/>
<use href="#dno" x="1385" y="987"/>
<rect x="1398" y="976" width="100" height="25" fill="#484848" stroke="#3e3e3e"/><text class="sm" x="1403" y="993">No Character Set</text>
<use href="#dno" x="1514" y="987"/>
<rect x="1527" y="976" width="100" height="25" fill="#484848" stroke="#3e3e3e"/><text class="sm" x="1532" y="993">No Anim Layer</text>
<rect x="1652" y="978" width="95" height="21" fill="#5a5a5a"/><rect x="1728" y="978" width="19" height="21" fill="#666"/><text x="1655" y="993" style="fill:#b4b4b4;font-size:11px">24 fps</text><use href="#dn" x="1737" y="987"/>
<path d="M1763 985A5 5 0 0 1 1768 981H1775M1775 981 1772 978M1775 981 1772 984M1775 989A5 5 0 0 1 1770 993H1763M1763 993 1766 990M1763 993 1766 996" fill="none" stroke="#d0d0d0" stroke-width="1.600"/>
<rect x="1783" y="982" width="15" height="13" fill="none" stroke="#e0974e" stroke-width="2"/><path d="M1783 986H1798M1783 990H1798M1788 982V995M1793 982V995" stroke="#e0974e"/><path d="M1795 978 1801 982 1795 986Z" fill="#ccc"/>
<path d="M1835 985H1839L1845 980V997L1839 992H1835Z" fill="#d0d0d0"/><path d="M1848 983A8 8 0 0 1 1848 994" fill="none" stroke="#d0d0d0"/>
<circle cx="1871" cy="988" r="8" fill="none" stroke="#c8c8c8" stroke-width="1.400"/><path d="M1871 982V994" stroke="#dd7c3e" stroke-width="2"/>
<circle cx="1896" cy="981" r="3" fill="none" stroke="#ccc"/><path d="M1900 982 1905 986 1899 990 1906 997M1899 990 1894 997M1899 986 1894 988" fill="none" stroke="#dd7c3e" stroke-width="2.400"/>
<!-- command row -->
<rect y="1007" width="1920" height="3" fill="#3b3b3b"/>
<circle cx="22" cy="1024" r="8" fill="#7fa73a"/><text x="18.500" y="1028" style="fill:#26331a;font-weight:bold;font-size:12px">?</text>
<text x="38" y="1028" style="font-size:10.600px;fill:#d0d0d0" textLength="220">Select the menus to appear in the Main Menu Bar</text>
<text x="843" y="1028" style="fill:#c8c8c8">MEL</text>
<rect x="876" y="1013" width="409" height="22" fill="#2f2f2f"/>
<path d="M1290 1014V1034" stroke="#666" stroke-dasharray="1 1"/>
<rect x="1293" y="1013" width="595" height="22" fill="#2f2f2f"/>
<rect x="1892" y="1015" width="21" height="21" fill="#c0c0c0"/><rect x="1893" y="1020" width="19" height="15" fill="#555"/><rect x="1898" y="1023" width="9" height="9" fill="none" stroke="#ccc"/>

<!-- taskbar -->
<rect y="1040" width="1920" height="40" fill="#1b2e40"/>
<path d="M15 1053 23 1052V1059H15ZM24 1051.500 33 1050V1059H24ZM15 1060H23V1067L15 1066ZM24 1060H33V1069L24 1067.500Z" fill="#fff"/>
<rect x="48" y="1040" width="288" height="40" fill="#f3f3f3"/>
<circle cx="71" cy="1057" r="5.500" fill="none" stroke="#222" stroke-width="1.300"/><path d="M67 1061 61 1068" stroke="#222" stroke-width="1.500"/>
<text x="88" y="1066" style="font-size:15px;fill:#222">Taper ici pour rechercher</text>
<g stroke="#e8e8e8" fill="none"><rect x="354.500" y="1056.500" width="9" height="7"/><path d="M353 1053H365M353 1067H365M367.500 1053V1055M367.500 1058V1062M367.500 1065V1067"/></g>
<circle cx="410" cy="1060" r="12" fill="#1f8fd4"/><path d="M399 1060C401 1049 417 1047 421 1058 423 1065 412 1066 408 1063 412 1056 404 1055 399 1060Z" fill="#46c4a8"/><path d="M401 1062C403 1056 409 1057 408 1063 407 1068 414 1070 418 1067 414 1073 399 1073 401 1062Z" fill="#1b5fa8"/>
<rect x="448" y="1051" width="22" height="18" fill="#f4c23c"/><path d="M448 1048H460L462 1052H448Z" fill="#e8a830"/><rect x="451" y="1060" width="16" height="9" fill="#2a8fd0"/><rect x="456" y="1060" width="6" height="4" fill="#f4c23c"/>
<path d="M498 1052H518L520 1072H496Z" fill="#f4f4f4"/><path d="M503 1052V1049A5 4 0 0 1 513 1049V1052" fill="none" stroke="#2aa0d8" stroke-width="1.500"/><rect x="503" y="1057" width="4.500" height="4.500" fill="#f25022"/><rect x="508.500" y="1057" width="4.500" height="4.500" fill="#7fba00"/><rect x="503" y="1062.500" width="4.500" height="4.500" fill="#00a4ef"/><rect x="508.500" y="1062.500" width="4.500" height="4.500" fill="#ffb900"/>
<path d="M545 1056 557 1046 569 1056V1072H545Z" fill="#1a9ae0"/><path d="M545 1056 557 1065 569 1056" fill="#bfe6f8"/>
<ellipse cx="607" cy="1060" rx="12" ry="13" fill="#e0262d"/><ellipse cx="607" cy="1060" rx="5" ry="10" fill="#1b2e40"/>
<circle cx="656" cy="1060" r="12" fill="#db4437"/><path d="M656 1060 666 1054A12 12 0 0 1 656 1072Z" fill="#f4c20d"/><path d="M656 1072A12 12 0 0 1 645 1054L656 1060Z" fill="#0f9d58"/><circle cx="656" cy="1060" r="6" fill="#fff"/><circle cx="656" cy="1060" r="4.500" fill="#4285f4"/>
<rect x="693" y="1048" width="24" height="24" fill="#f0f0f0"/><text x="694" y="1068" style="font-size:22px;font-weight:bold;fill:#1f9aa8">M</text>
<rect x="730" y="1040" width="48" height="40" fill="#3c4a58"/>
<rect x="744" y="1050" width="18" height="15" fill="#b8c0c8" stroke="#8a949e"/><path d="M748 1054 752 1060 758 1052" stroke="#5fb5c6" fill="none"/><ellipse cx="753" cy="1069" rx="9" ry="2.500" fill="#c8c8c8"/>
<g fill="#76b9ed"><rect x="440" y="1078" width="38" height="2"/><rect x="636" y="1078" width="40" height="2"/><rect x="685" y="1078" width="40" height="2"/><rect x="730" y="1078" width="48" height="2"/></g>
<!-- tray -->
<path d="M1534 1049A12 12 0 1 1 1526 1072 16 16 0 0 0 1534 1049Z" fill="#e8a628"/><ellipse cx="1528" cy="1052" rx="7" ry="4.500" fill="#7fbce8"/><ellipse cx="1537" cy="1067" rx="7" ry="4" fill="#8fc4ea"/>
<text class="tb" x="1553" y="1065">15°C</text><text class="tb" x="1592" y="1065">Eclaircies</text>
<path d="M1672 1063 1677 1058 1682 1063" fill="none" stroke="#eee" stroke-width="1.200"/>
<g fill="none" stroke="#e8e8e8"><rect x="1697.500" y="1055.500" width="9" height="9" rx="1"/><path d="M1699 1052H1705M1699 1068H1705M1706 1058 1709 1060 1706 1062"/></g>
<path d="M1720 1068A14 14 0 0 1 1732 1053M1724 1068A10 10 0 0 1 1732 1058M1728 1068A6 6 0 0 1 1732 1063" fill="none" stroke="#e0e0e0"/>
<path d="M1742 1058H1745L1749 1054V1066L1745 1062H1742Z" fill="none" stroke="#e8e8e8"/><path d="M1751 1057A5 5 0 0 1 1751 1063M1753 1054A8 8 0 0 1 1753 1066" fill="none" stroke="#e8e8e8"/>
<text x="1768" y="1064" style="fill:#efefef;font-size:12px">FRA</text>
<text x="1818" y="1055" style="fill:#efefef;font-size:12px">02:59</text><text x="1803" y="1073" style="fill:#efefef;font-size:12px">11/05/2024</text>
<path d="M1879 1053H1895V1067H1884L1879 1071Z" fill="#f2f2f2"/><path d="M1882 1057H1892M1882 1060H1892M1882 1063H1889" stroke="#1b2e40"/>
<circle cx="1895" cy="1067" r="7" fill="#2a3a48" stroke="#e0e0e0"/><text x="1892" y="1071" style="font-size:10px;font-weight:bold;fill:#fff">4</text>
<path d="M1915.500 1040V1080" stroke="#6a7a88"/>
</svg>
</body></html>
